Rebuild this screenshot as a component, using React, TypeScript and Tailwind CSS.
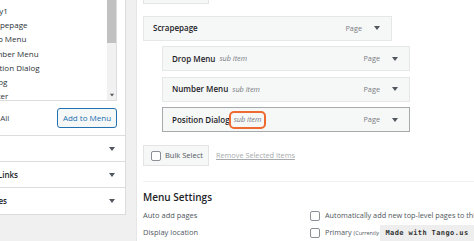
import React from "react";

const Arrow = ({ className = "" }: { className?: string }) => (
  <svg width="6" height="4" viewBox="0 0 6 4" className={className}>
    <path d="M0 0 L6 0 L3 4 Z" fill="#50575e" />
  </svg>
);

const Checkbox = () => (
  <span className="inline-block w-[10px] h-[10px] rounded-[2px] border border-[#8c8f94] bg-white shrink-0" />
);

const pages = ["Story1", "Scrapepage", "Drop Menu", "Number Menu", "Position Dialog", "Dialog", "Footer"];

function MenuItem({ title, sub, indent, active, highlight }: { title: string; sub?: boolean; indent?: boolean; active?: boolean; highlight?: boolean }) {
  return (
    <div
      className={`flex items-center h-[25px] bg-[#f6f7f7] border ${active ? "border-[#a7aaad]" : "border-[#e6e7e9]"} ${indent ? "ml-[19px] w-[248px]" : "w-[249px]"} pl-[9px] pr-[9px]`}
    >
      <span className="text-[8px] font-semibold text-[#1d2327] whitespace-nowrap">{title}</span>
      {sub && (
        <span
          className={`text-[7.3px] italic text-[#787c82] whitespace-nowrap ${highlight ? "ml-[-1px] border-2 border-[#ee6a30] rounded-[5px] px-[3px] py-[1.5px]" : "ml-[4px]"}`}
        >
          sub item
        </span>
      )}
      <span className="ml-auto text-[7.3px] text-[#787c82]">Page</span>
      <Arrow className="ml-[12px] mr-[2px]" />
    </div>
  );
}

export default function App() {
  return (
    <div className="relative w-[474px] h-[241px] overflow-hidden bg-[#f0f0f1] flex font-['Open_Sans',sans-serif] text-[#3c434a]">
      {/* left column */}
      <div className="w-[126px] shrink-0">
        <div className="h-[215px] bg-white border-r border-b border-[#dcdcde] flex flex-col">
          <div className="flex h-[101px] w-[117px] border-r border-b border-[#dcdcde]">
            <div className="flex-1 overflow-hidden">
              <ul className="ml-[-16px] pt-[4px] flex flex-col">
                {pages.map((p) => (
                  <li key={p} className="h-[14.2px] flex items-center whitespace-nowrap text-[8px] text-[#2c3338]">
                    {p}
                  </li>
                ))}
              </ul>
            </div>
            <div className="w-[9px] bg-[#f1f1f1] flex flex-col items-center">
              <div className="w-[9px] h-[43px] bg-[#c1c1c1]" />
              <div className="flex-1" />
              <Arrow className="mb-[3px] scale-75" />
            </div>
          </div>
          <div className="flex items-center h-[35px] border-b border-[#dcdcde]">
            <span className="ml-[-24px] text-[8px] text-[#3c434a] whitespace-nowrap">Select All</span>
            <button className="ml-auto mr-[8px] h-[20px] w-[60px] rounded-[3px] border border-[#2271b1] bg-[#f6f7f7] text-[8px] text-[#2271b1] whitespace-nowrap">
              Add to Menu
            </button>
          </div>
          {["Posts", "Custom Links", "Categories"].map((t) => (
            <div key={t} className="flex items-center h-[26px] border-b border-[#dcdcde] last:border-b-0 pr-[10px]">
              <span className="ml-[-34px] text-[8px] font-semibold text-[#1d2327] whitespace-nowrap">{t}</span>
              <Arrow className="ml-auto" />
            </div>
          ))}
        </div>
      </div>

      {/* right column */}
      <div className="ml-[10px] flex-1 bg-white border-l border-[#e6e6e6] pl-[6px] flex flex-col">
        <div className="w-[66px] h-[4px] bg-[#f6f7f7] border border-t-0 border-[#e4e4e6]" />
        <div className="mt-[12px] flex flex-col gap-[5.5px]">
          <MenuItem title="Scrapepage" />
          <MenuItem title="Drop Menu" sub indent />
          <MenuItem title="Number Menu" sub indent />
          <MenuItem title="Position Dialog" sub indent active highlight />
        </div>
        <div className="mt-[13px] flex items-center">
          <div className="flex items-center h-[21px] w-[66px] bg-[#f6f7f7] border border-[#e4e4e6] pl-[7px]">
            <Checkbox />
            <span className="ml-[4px] text-[7.5px] text-[#50575e] whitespace-nowrap">Bulk Select</span>
          </div>
          <span className="ml-[7px] text-[7.3px] text-[#a7aaad] underline whitespace-nowrap">Remove Selected Items</span>
        </div>
        <div className="mt-[15px] border-t border-[#f0f0f1]" />
        <h3 className="mt-[8px] text-[10px] font-semibold text-[#1d2327] leading-[14px]">Menu Settings</h3>
        <div className="mt-[3px] flex items-center h-[20px]">
          <span className="w-[167px] text-[7.5px] text-[#50575e] whitespace-nowrap">Auto add pages</span>
          <Checkbox />
          <span className="ml-[5px] text-[7.3px] text-[#50575e] whitespace-nowrap">Automatically add new top-level pages to this menu</span>
        </div>
        <div className="flex items-center h-[19px]">
          <span className="w-[167px] text-[7.5px] text-[#50575e] whitespace-nowrap">Display location</span>
          <Checkbox />
          <span className="ml-[5px] text-[7.3px] text-[#50575e] whitespace-nowrap">
            Primary <span className="text-[5.5px]">(Currently set to: Main Menu)</span>
          </span>
        </div>
      </div>

      <div className="absolute right-0 bottom-0 w-[94px] h-[16px] bg-[#eeeeee] flex items-center justify-center">
        <span className="font-['DejaVu_Sans_Mono',monospace] text-[7px] font-bold tracking-[0.4px] text-[#333] whitespace-nowrap">Made with Tango.us</span>
      </div>
    </div>
  );
}
